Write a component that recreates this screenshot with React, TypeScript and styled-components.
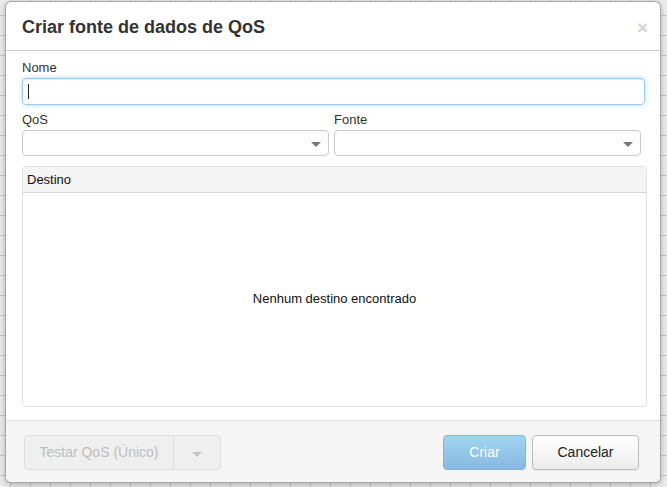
import * as React from 'react';
import styled, {createGlobalStyle} from 'styled-components';

const Global = createGlobalStyle`
  html, body {
    margin: 0;
    padding: 0;
    height: 100%;
  }
  body {
    font-family: "Liberation Sans", Arial, sans-serif;
    font-size: 13px;
    color: #333;
    background-color: #ececec;
    background-image:
      linear-gradient(to right, #c9c9c9 1px, transparent 1px),
      linear-gradient(to bottom, #c9c9c9 1px, transparent 1px);
    background-size: 20px 20px;
    background-position: 10px 15px;
  }
`;

const Backdrop = styled.div`
  padding: 1px 6px 4px 5px;
  box-sizing: border-box;
`;

const Dialog = styled.div`
  width: 656px;
  height: 482px;
  box-sizing: border-box;
  background: #fff;
  border: 1px solid rgba(0, 0, 0, 0.35);
  border-radius: 6px;
  box-shadow: 0 2px 6px rgba(0, 0, 0, 0.25);
  display: flex;
  flex-direction: column;
  overflow: hidden;
`;

const Header = styled.div`
  height: 48px;
  flex: none;
  display: flex;
  align-items: center;
  justify-content: space-between;
  padding: 0 12px 0 16px;
  border-bottom: 1px solid #ccc;
`;

const Title = styled.h3`
  margin: 0;
  font-size: 18px;
  font-weight: bold;
  color: #333;
  padding-top: 2px;
`;

const Close = styled.span`
  font-size: 19px;
  font-weight: bold;
  color: #d4d4d4;
  line-height: 1;
  padding-top: 2px;
`;

const Body = styled.div`
  flex: 1;
  padding: 8px 13px 13px 16px;
  display: flex;
  flex-direction: column;
`;

const Label = styled.label`
  display: block;
  line-height: 18px;
  margin-bottom: 1px;
  color: #333;
`;

const Group = styled.div`
  margin-bottom: 6px;
`;

const TextInput = styled.div`
  height: 27px;
  margin-right: 2px;
  box-sizing: border-box;
  border: 1px solid #9ecaed;
  border-radius: 4px;
  box-shadow: 0 0 5px rgba(82, 168, 236, 0.45), inset 0 1px 1px rgba(0, 0, 0, 0.08);
  display: flex;
  align-items: center;
  padding-left: 5px;
`;

const Caret = styled.span`
  width: 1px;
  height: 15px;
  background: #222;
`;

const Row = styled.div`
  display: grid;
  grid-template-columns: 307px 307px;
  column-gap: 5px;
  margin-bottom: 10px;
`;

const Select = styled.div`
  height: 26px;
  box-sizing: border-box;
  border: 1px solid #ccc;
  border-radius: 4px;
  display: flex;
  align-items: center;
  justify-content: flex-end;
  padding-right: 7px;
`;

const Arrow = styled.span<{ $color?: string }>`
  width: 0;
  height: 0;
  border-left: 5px solid transparent;
  border-right: 5px solid transparent;
  border-top: 5px solid ${p => p.$color || '#777'};
  margin-top: 2px;
`;

const Panel = styled.div`
  flex: 1;
  border: 1px solid #e3e3e3;
  border-radius: 4px;
  display: flex;
  flex-direction: column;
  overflow: hidden;
`;

const PanelHead = styled.div`
  height: 25px;
  flex: none;
  background: #f4f4f4;
  border-bottom: 1px solid #d8d8d8;
  padding-left: 4px;
  display: flex;
  align-items: center;
  color: #111;
`;

const Empty = styled.div`
  flex: 1;
  display: flex;
  align-items: center;
  justify-content: center;
  color: #111;
  padding-bottom: 2px;
`;

const Footer = styled.div`
  height: 62px;
  flex: none;
  box-sizing: border-box;
  background: #f5f5f5;
  border-top: 1px solid #ddd;
  display: flex;
  align-items: center;
  padding: 1px 21px 0 18px;
`;

const Split = styled.div`
  display: flex;
  height: 35px;
  box-sizing: border-box;
  border: 1px solid #ddd;
  border-radius: 4px;
  background: #efefef;
  color: #bdbdbd;
  font-size: 14px;
`;

const SplitMain = styled.div`
  width: 148px;
  display: flex;
  align-items: center;
  justify-content: center;
  border-right: 1px solid #ddd;
`;

const SplitToggle = styled.div`
  width: 46px;
  display: flex;
  align-items: center;
  justify-content: center;
  padding-top: 3px;
`;

const Spacer = styled.div`
  flex: 1;
`;

const Button = styled.div<{ $primary?: boolean; $width: number }>`
  width: ${p => p.$width}px;
  height: 35px;
  box-sizing: border-box;
  border-radius: 4px;
  display: flex;
  align-items: center;
  justify-content: center;
  font-size: 14px;
  margin-left: 6px;
  ${p => p.$primary ? `
    background: linear-gradient(#9dd5ef, #8ab8e3);
    border: 1px solid #85b4dc;
    color: #fff;
  ` : `
    background: linear-gradient(#ffffff, #ececec);
    border: 1px solid #bcbcbc;
    color: #222;
    box-shadow: 0 1px 1px rgba(0,0,0,0.06);
  `}
`;

export default function App() {
  return (
    <Backdrop>
      <Global/>
      <Dialog>
        <Header>
          <Title>Criar fonte de dados de QoS</Title>
          <Close>×</Close>
        </Header>
        <Body>
          <Group>
            <Label>Nome</Label>
            <TextInput><Caret/></TextInput>
          </Group>
          <Row>
            <div>
              <Label>QoS</Label>
              <Select><Arrow/></Select>
            </div>
            <div>
              <Label>Fonte</Label>
              <Select><Arrow/></Select>
            </div>
          </Row>
          <Panel>
            <PanelHead>Destino</PanelHead>
            <Empty>Nenhum destino encontrado</Empty>
          </Panel>
        </Body>
        <Footer>
          <Split>
            <SplitMain>Testar QoS (Único)</SplitMain>
            <SplitToggle><Arrow $color="#c4c4c4"/></SplitToggle>
          </Split>
          <Spacer/>
          <Button $primary $width={83}>Criar</Button>
          <Button $width={107}>Cancelar</Button>
        </Footer>
      </Dialog>
    </Backdrop>
  );
}
